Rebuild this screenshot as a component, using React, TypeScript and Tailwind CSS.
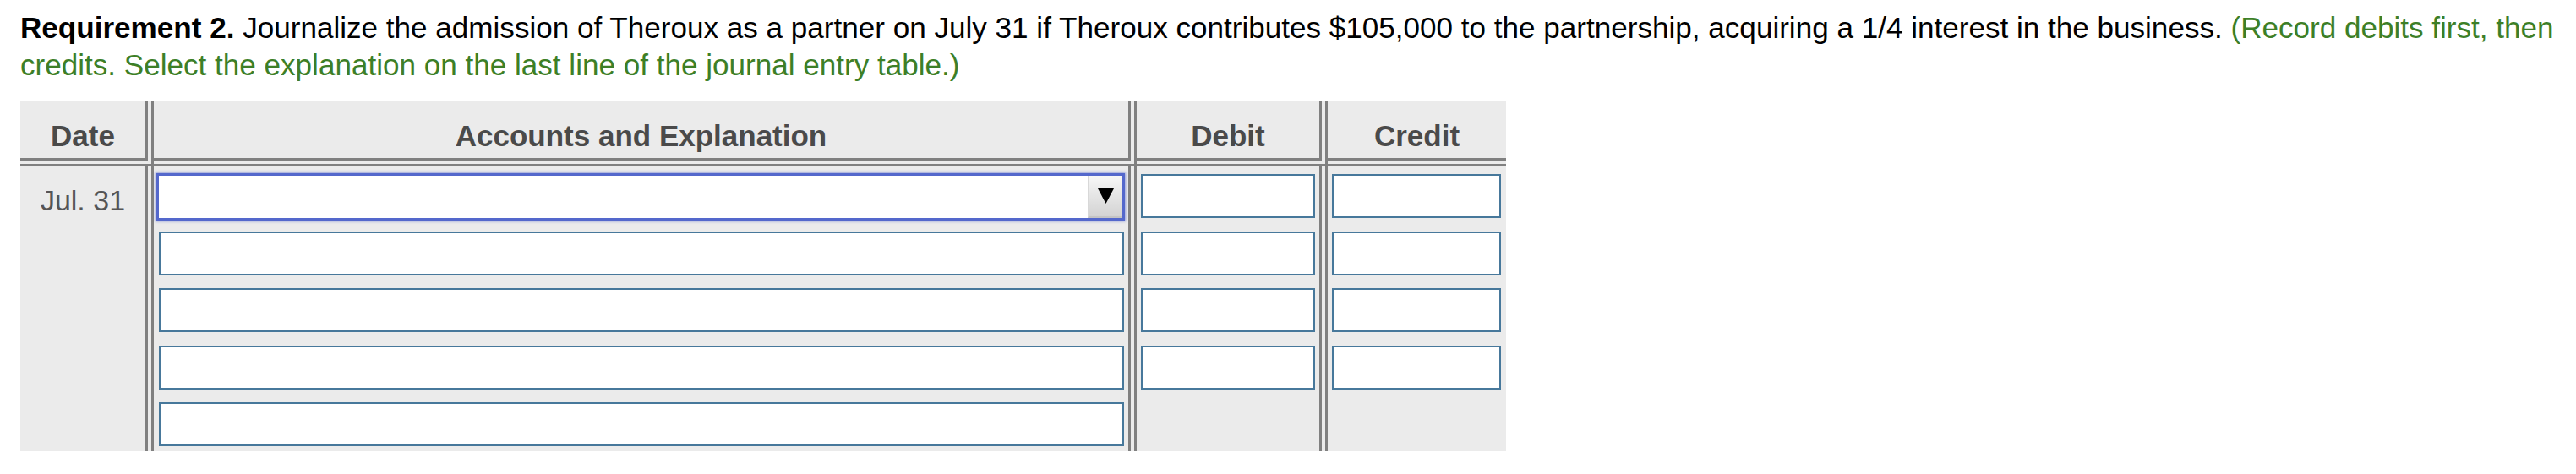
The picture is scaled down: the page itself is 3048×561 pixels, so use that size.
export default function App() {
  const cellBorder = 'border-r-[10px] border-double border-[#808080]'
  const headBorder = 'border-b-[10px] border-double border-[#808080]'
  const input = 'h-[52px] bg-white border-2 border-[#47789b]'

  return (
    <div className="w-[3048px] h-[561px] bg-white font-['Liberation_Sans',Arial,sans-serif]">
      <div className="px-[24px] pt-[11px]">
        <p className="text-[35.1px] leading-[44px] text-black">
          <b>Requirement 2.</b> Journalize the admission of Theroux as a partner on July 31 if Theroux
          contributes $105,000 to the partnership, acquiring a 1/4 interest in the business.{' '}
          <span className="text-[#3d7f27]">
            (Record debits first, then credits. Select the explanation on the last line of the journal
            entry table.)
          </span>
        </p>
      </div>

      <div className="ml-[24px] mt-[20px] w-[1758px] bg-[#ebebeb] grid grid-cols-[158px_1163px_226px_211px] text-[#4a4a4a]">
        {/* header */}
        <div className={`h-[78px] ${cellBorder} ${headBorder} flex justify-center pt-[22px]`}>
          <span className="text-[35px] leading-[40px] font-bold">Date</span>
        </div>
        <div className={`h-[78px] ${cellBorder} ${headBorder} flex justify-center pt-[22px]`}>
          <span className="text-[35px] leading-[40px] font-bold">Accounts and Explanation</span>
        </div>
        <div className={`h-[78px] ${cellBorder} ${headBorder} flex justify-center pt-[22px]`}>
          <span className="text-[35px] leading-[40px] font-bold">Debit</span>
        </div>
        <div className={`h-[78px] ${headBorder} flex justify-center pt-[22px]`}>
          <span className="text-[35px] leading-[40px] font-bold">Credit</span>
        </div>

        {/* body */}
        <div className={`h-[337px] ${cellBorder} flex justify-center pt-[20px]`}>
          <span className="text-[34px] leading-[40px] text-[#555555]">Jul. 31</span>
        </div>
        <div className={`h-[337px] ${cellBorder} flex flex-col gap-[15.5px] pt-[9px] pl-[6px] pr-[5px]`}>
          <div className="h-[56px] -mt-px -mb-[3px] -ml-[3px] -mr-px flex bg-white border-[3px] border-[#5468cc] shadow-[0_0_3px_1px_rgba(84,104,204,0.6)]">
            <div className="flex-1" />
            <div className="w-[41px] flex items-center justify-center bg-gradient-to-b from-[#f7f7f7] to-[#d3d3d3] border-l border-[#d8d8d8] border-b-2 border-b-[#c4c4c4]">
              <svg width="19" height="18" viewBox="0 0 19 18">
                <polygon points="0,0 19,0 9.5,18" fill="#000" />
              </svg>
            </div>
          </div>
          <div className={input} />
          <div className={input} />
          <div className={input} />
          <div className={input} />
        </div>
        <div className={`h-[337px] ${cellBorder} flex flex-col gap-[15.5px] pt-[9px] px-[5px]`}>
          <div className={input} />
          <div className={input} />
          <div className={input} />
          <div className={input} />
        </div>
        <div className="h-[337px] flex flex-col gap-[15.5px] pt-[9px] pl-[5px] pr-[6px]">
          <div className={input} />
          <div className={input} />
          <div className={input} />
          <div className={input} />
        </div>
      </div>
    </div>
  )
}
